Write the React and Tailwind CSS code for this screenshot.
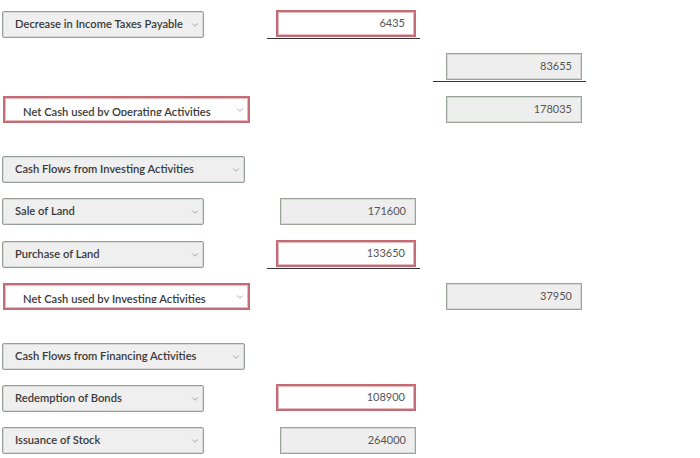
import { ChevronDown } from 'lucide-react';

function Select({ label, width = 'w-[202px]', error = false }) {
  if (error) {
    return (
      <div className="ml-px flex h-[27px] w-[247px] items-center border-2 border-[#c46c75] bg-white pl-[18px] pr-[3px] shadow-[inset_0_0_0_1px_#e6b9bd]">
        <div className="h-[13px] min-w-0 flex-1 overflow-hidden pt-[1px]">
          <span className="block text-[11.2px] leading-[16px] font-semibold text-[#3a3a3a] whitespace-nowrap">{label}</span>
        </div>
        <ChevronDown className="h-[10px] w-[10px] shrink-0 text-[#7c7c7c]" strokeWidth={1.6} />
      </div>
    );
  }
  return (
    <div className={`flex h-[27px] ${width} items-center rounded-[2px] border border-[#989e98] bg-[#efefef] pl-[12px] pr-[3px] shadow-[inset_0_0_0_1px_#d6d9d6]`}>
      <span className="min-w-0 flex-1 text-[11.2px] font-semibold text-[#3a3a3a] whitespace-nowrap">{label}</span>
      <ChevronDown className="h-[10px] w-[10px] shrink-0 text-[#7c7c7c]" strokeWidth={1.6} />
    </div>
  );
}

function Amount({ value, error = false, line = false }) {
  return (
    <div className="flex w-[153px] flex-col items-end">
      {error ? (
        <div className="mr-[4px] flex h-[27px] w-[140px] items-center justify-end border-2 border-[#c46c75] bg-white pr-[9px] shadow-[inset_0_0_0_1px_#e6b9bd] text-[11px] text-[#555]">
          {value}
        </div>
      ) : (
        <div className="mr-[4px] flex h-[27px] w-[136px] items-center justify-end border border-[#9aa29a] bg-[#eeeeee] pr-[9px] shadow-[inset_0_0_0_1px_#d4d8d4] text-[11px] text-[#555]">
          {value}
        </div>
      )}
      {line && <div className="mt-px h-px w-full bg-[#333]" />}
    </div>
  );
}

function Row({ className = '', left, mid, right }) {
  return (
    <div className={`flex h-[27px] items-start ${className}`}>
      <div className="w-[265px]">{left}</div>
      <div className="w-[166px]">{mid}</div>
      <div>{right}</div>
    </div>
  );
}

export default function App() {
  return (
    <div className="h-[458px] w-[700px] overflow-hidden bg-white pl-[2px] pt-[10px] font-['Lato','Noto_Sans',sans-serif]">
      <Row
        left={<div className="pt-px"><Select label="Decrease in Income Taxes Payable" /></div>}
        mid={<Amount value="6435" error line />}
      />
      <Row className="mt-[16px]" right={<Amount value="83655" line />} />
      <Row className="mt-[16px]" left={<Select label="Net Cash used by Operating Activities" error />} right={<Amount value="178035" />} />
      <Row className="mt-[33px]" left={<Select label="Cash Flows from Investing Activities" width="w-[243px]" />} />
      <Row className="mt-[15px]" left={<Select label="Sale of Land" />} mid={<Amount value="171600" />} />
      <Row
        className="mt-[15px]"
        left={<div className="pt-px"><Select label="Purchase of Land" /></div>}
        mid={<Amount value="133650" error line />}
      />
      <Row className="mt-[16px]" left={<Select label="Net Cash used by Investing Activities" error />} right={<Amount value="37950" />} />
      <Row className="mt-[33px]" left={<Select label="Cash Flows from Financing Activities" width="w-[243px]" />} />
      <Row
        className="mt-[14px]"
        left={<div className="pt-px"><Select label="Redemption of Bonds" /></div>}
        mid={<Amount value="108900" error />}
      />
      <Row className="mt-[16px]" left={<Select label="Issuance of Stock" />} mid={<Amount value="264000" />} />
    </div>
  );
}
